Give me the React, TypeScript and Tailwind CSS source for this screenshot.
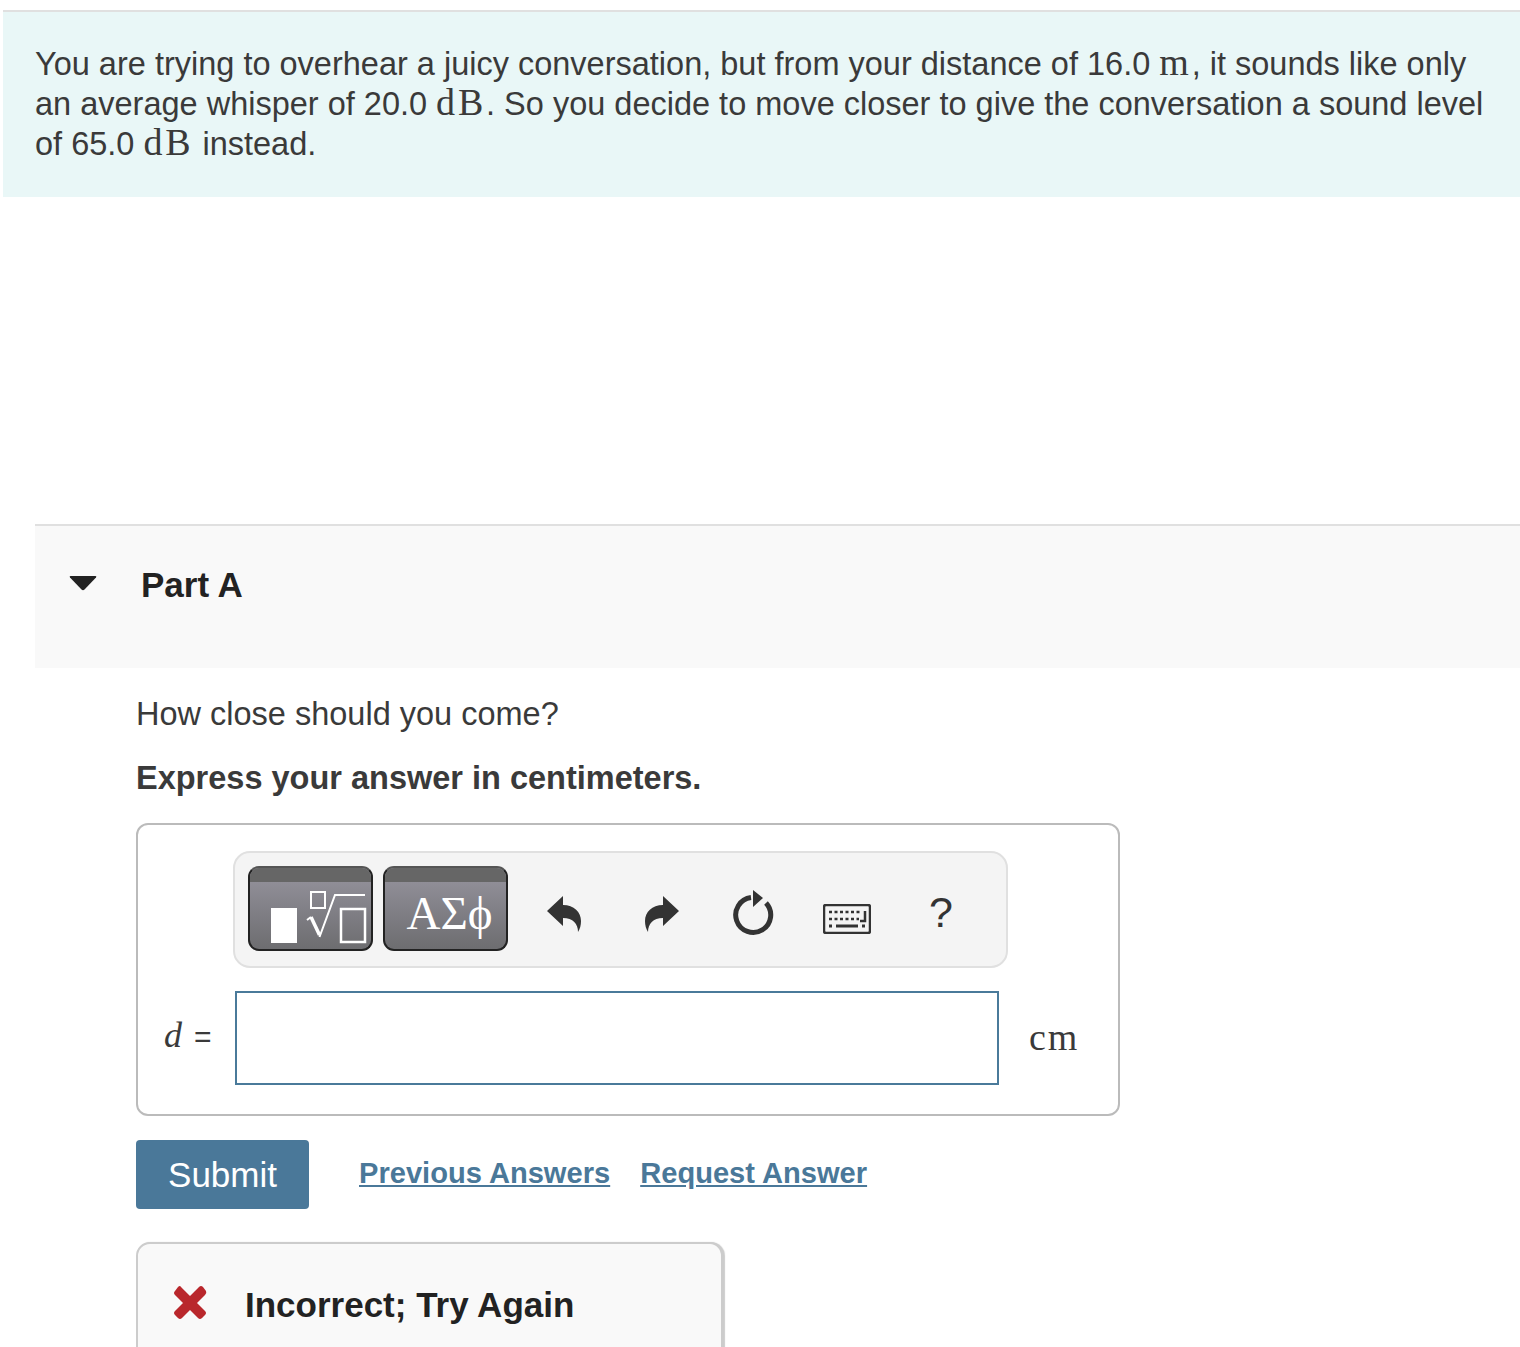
const sans = "font-['Liberation_Sans',Arial,sans-serif]";
const serif = "font-['Liberation_Serif','Times_New_Roman',serif]";

function M({ children }: { children: React.ReactNode }) {
  return <span className={`${serif} text-[38px] tracking-[2.8px] leading-[0px]`}>{children}</span>;
}

function Undo({ flip }: { flip?: boolean }) {
  return (
    <svg width="36" height="42" viewBox="0 0 36 42" className={flip ? "-scale-x-100" : ""}>
      <path d="M1 20 L17 5 L17 14 C28 14 35 21 35 30 C35 34 34 38 32 41 C32 33 27 27 17 27 L17 35 Z" fill="#333" />
    </svg>
  );
}

function ToolButton({ children }: { children: React.ReactNode }) {
  return (
    <div className="relative w-[125px] h-[85px] rounded-[11px] border-2 border-[#222] border-t-[#555] bg-gradient-to-b from-[#97959f] to-[#6d6d70] overflow-hidden">
      <div className="h-[14px] bg-[#666]" />
      {children}
    </div>
  );
}

export default function App() {
  return (
    <div className={`${sans} h-[1347px] overflow-hidden bg-white text-[#3a3a3a] text-[32.5px] leading-[40px]`}>
      <div className="h-[10px]" />
      <div className="ml-[3px] border-t-2 border-[#e0e0e0]" />
      <div className="ml-[3px] h-[185px] bg-[#e9f7f7] pl-[32px] pr-[30px] pt-[32px]">
        You are trying to overhear a juicy conversation, but from your distance of 16.0 <M>m</M>, it sounds like only
        an average whisper of 20.0 <M>dB</M>. So you decide to move closer to give the conversation a sound level
        of 65.0 <M>dB</M> instead.
      </div>

      <div className="ml-[35px] mt-[327px] h-[144px] border-t-2 border-[#e0e0e0] bg-[#f9f9f9] flex items-start">
        <svg width="28" height="16" viewBox="0 0 28 16" className="ml-[34px] mt-[49px]">
          <path d="M1.5 1 H26.5 Q28 1 27 2.5 L15.5 14.5 Q14 16 12.5 14.5 L1 2.5 Q0 1 1.5 1 Z" fill="#222" />
        </svg>
        <div className="ml-[44px] mt-[38px] font-bold text-[#222] text-[35px] leading-[42px]">Part A</div>
      </div>

      <div className="ml-[136px]">
        <p className="mt-[26px]">How close should you come?</p>
        <p className="mt-[24px] font-bold">Express your answer in centimeters.</p>

        <div className="mt-[25px] w-[984px] h-[293px] rounded-[12px] border-2 border-[#bbb] flex flex-col">
          <div className="ml-[95px] mt-[26px] w-[775px] h-[117px] rounded-[17px] border-2 border-[#e0e0e0] bg-[#f4f4f4] flex items-start pl-[13px] pt-[13px]">
            <ToolButton>
              <div className="absolute left-[21px] top-[40px] w-[26px] h-[35px] bg-white" />
              <svg width="70" height="56" viewBox="0 0 70 56" className="absolute left-[54px] top-[21px]" fill="none" stroke="#fff">
                <rect x="7" y="3" width="14" height="16" strokeWidth="2" />
                <path d="M3 31 L7 28" strokeWidth="2" />
                <path d="M7 28 L15.5 46" strokeWidth="3.5" />
                <path d="M15.5 48 L31 6 H61" strokeWidth="2" />
                <rect x="37" y="20" width="24" height="33" strokeWidth="2.5" />
              </svg>
            </ToolButton>
            <div className="w-[10px]" />
            <ToolButton>
              <div className={`absolute inset-0 flex items-center justify-center pl-[8px] pt-[10px] text-white text-[47px] leading-none ${serif}`}>
                ΑΣϕ
              </div>
            </ToolButton>
            <div className="ml-[38px] mt-[25px]"><Undo /></div>
            <div className="ml-[62px] mt-[25px]"><Undo flip /></div>
            <svg width="44" height="48" viewBox="0 0 44 48" className="ml-[51px] mt-[22px]" fill="none">
              <path d="M20 9.6 A17.5 17.5 0 1 0 35 15" stroke="#333" strokeWidth="5" />
              <path d="M22 2 L32 10 L22 19 Z" fill="#333" />
            </svg>
            <svg width="48" height="30" viewBox="0 0 48 30" className="ml-[48px] mt-[38px]" fill="none" stroke="#333">
              <rect x="1" y="1" width="46" height="28" rx="2" strokeWidth="2.5" />
              <path d="M6 8 H38" strokeWidth="2.5" strokeDasharray="3 2.5" />
              <path d="M6 15 H36" strokeWidth="2.5" strokeDasharray="3 2.5" />
              <path d="M42 7 V17 H37" strokeWidth="2.5" />
              <path d="M6 22 H9 M13 22 H35 M39 22 H42" strokeWidth="3" />
            </svg>
            <div className="ml-[58px] mt-[21px] text-[43px] leading-[50px] text-[#333]">?</div>
          </div>

          <div className="flex items-start mt-[23px]">
            <div className={`${serif} w-[97px] pl-[26px] pt-[24px] text-[36px] leading-[40px] whitespace-nowrap`}>
              <i>d</i><span className={`${sans} ml-[12px] text-[30px]`}>=</span>
            </div>
            <div className="w-[764px] h-[94px] border-2 border-[#4a7a9a] bg-white" />
            <div className={`${serif} ml-[30px] pt-[23px] text-[38px] tracking-[2px] leading-[46px]`}>cm</div>
          </div>
        </div>

        <div className="mt-[24px] flex items-start">
          <div className="w-[173px] h-[69px] rounded-[4px] bg-[#4a7899] text-white flex items-center justify-center text-[35px]">Submit</div>
          <a className="ml-[50px] mt-[12px] font-bold text-[#4a7899] underline text-[29.1px] leading-[42px]">Previous Answers</a>
          <a className="ml-[30px] mt-[12px] font-bold text-[#4a7899] underline text-[29.1px] leading-[42px]">Request Answer</a>
        </div>

        <div className="mt-[33px] w-[588px] h-[160px] rounded-t-[14px] border-2 border-[#ccc] border-r-[3px] bg-[#f9f9f9] shadow-[1px_0_1px_#ccc] flex items-start">
          <svg width="36" height="36" viewBox="0 0 36 36" className="ml-[34px] mt-[40px]">
            <path d="M9 3 L18 12 L27 3 Q29 1 31 3 L34 7 Q35 9 33 11 L25 19 L33 27 Q35 29 33 31 L30 34 Q28 36 26 34 L18 26 L10 34 Q8 36 6 34 L3 31 Q1 29 3 27 L11 19 L3 11 Q1 9 3 7 L6 3 Q8 1 9 3 Z" fill="#b9272c" />
          </svg>
          <div className="ml-[37px] mt-[40px] font-bold text-[#222] text-[35px] leading-[42px]">Incorrect; Try Again</div>
        </div>
      </div>
    </div>
  );
}
